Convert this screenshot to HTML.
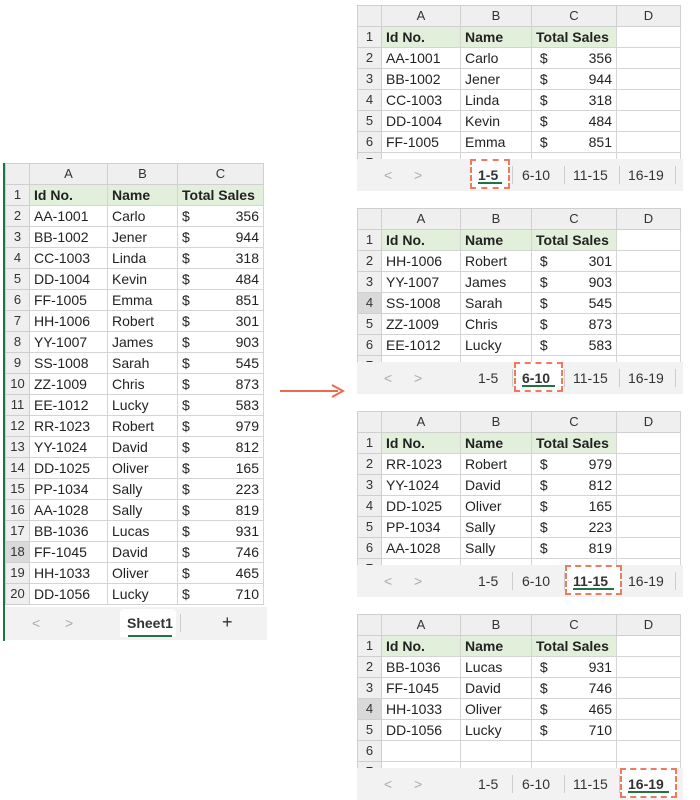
<!DOCTYPE html>
<html><head><meta charset="utf-8"><style>
body{margin:0;width:700px;height:800px;background:#fff;position:relative;font-family:"Liberation Sans",sans-serif;color:#222;overflow:hidden}
.p{position:absolute}
table{border-collapse:collapse;table-layout:fixed;font-size:14px}
td{border:1px solid #d4d4d4;height:20px;padding:0 4px;white-space:nowrap;overflow:hidden;line-height:20px}
tr.h td{background:#efefef;text-align:center;color:#333;font-size:13px;border-color:#cfcfcf}
td.n{background:#efefef;text-align:center;color:#333;font-size:13px;padding:0;border-color:#cfcfcf}
tr.g td:not(.n):not(.d){background:#e2efda;font-weight:bold}
td.s span{float:right}
.bar{position:absolute;background:#f2f2f2;font-size:14px;color:#333}
.bar span{position:absolute;top:8px}
.arr{color:#aaa;font-size:14px}
.act{position:absolute;background:#fff;border:2px dashed #ee7b60;font-weight:bold}
.act i{position:absolute;left:6px;right:6px;bottom:3px;height:2px;background:#217346}
.sep{position:absolute;width:1px;height:18px;background:#ccc;top:7px}
</style></head><body>

<div class="p" style="left:3px;top:163px;width:2px;height:478px;background:#217346"></div>
<div class="p" style="left:5px;top:163px">
<table style="width:258px">
<colgroup><col style="width:24px"><col style="width:78px"><col style="width:70px"><col style="width:86px"></colgroup>
<tr class="h"><td></td><td>A</td><td>B</td><td>C</td></tr>
<tr class="g"><td class="n">1</td><td>Id No.</td><td>Name</td><td>Total Sales</td></tr>
<tr><td class="n">2</td><td>AA-1001</td><td>Carlo</td><td class="s">$<span>356</span></td></tr>
<tr><td class="n">3</td><td>BB-1002</td><td>Jener</td><td class="s">$<span>944</span></td></tr>
<tr><td class="n">4</td><td>CC-1003</td><td>Linda</td><td class="s">$<span>318</span></td></tr>
<tr><td class="n">5</td><td>DD-1004</td><td>Kevin</td><td class="s">$<span>484</span></td></tr>
<tr><td class="n">6</td><td>FF-1005</td><td>Emma</td><td class="s">$<span>851</span></td></tr>
<tr><td class="n">7</td><td>HH-1006</td><td>Robert</td><td class="s">$<span>301</span></td></tr>
<tr><td class="n">8</td><td>YY-1007</td><td>James</td><td class="s">$<span>903</span></td></tr>
<tr><td class="n">9</td><td>SS-1008</td><td>Sarah</td><td class="s">$<span>545</span></td></tr>
<tr><td class="n">10</td><td>ZZ-1009</td><td>Chris</td><td class="s">$<span>873</span></td></tr>
<tr><td class="n">11</td><td>EE-1012</td><td>Lucky</td><td class="s">$<span>583</span></td></tr>
<tr><td class="n">12</td><td>RR-1023</td><td>Robert</td><td class="s">$<span>979</span></td></tr>
<tr><td class="n">13</td><td>YY-1024</td><td>David</td><td class="s">$<span>812</span></td></tr>
<tr><td class="n">14</td><td>DD-1025</td><td>Oliver</td><td class="s">$<span>165</span></td></tr>
<tr><td class="n">15</td><td>PP-1034</td><td>Sally</td><td class="s">$<span>223</span></td></tr>
<tr><td class="n">16</td><td>AA-1028</td><td>Sally</td><td class="s">$<span>819</span></td></tr>
<tr><td class="n">17</td><td>BB-1036</td><td>Lucas</td><td class="s">$<span>931</span></td></tr>
<tr><td class="n" style="background:#d9d9d9">18</td><td>FF-1045</td><td>David</td><td class="s">$<span>746</span></td></tr>
<tr><td class="n">19</td><td>HH-1033</td><td>Oliver</td><td class="s">$<span>465</span></td></tr>
<tr><td class="n">20</td><td>DD-1056</td><td>Lucky</td><td class="s">$<span>710</span></td></tr>
</table></div>
<div class="bar" style="left:5px;top:607px;width:262px;height:33px">
<span class="arr" style="left:27px">&lt;</span><span class="arr" style="left:60px">&gt;</span>
<div class="p" style="left:115px;top:2px;width:56px;height:28px;background:#fff;border-radius:4px 4px 0 0"></div>
<span style="left:122px;font-weight:bold">Sheet1</span>
<div class="p" style="left:123px;top:28px;width:44px;height:2px;background:#217346"></div>
<div class="sep" style="left:175px"></div>
<span style="left:217px;font-size:18px;top:5px">+</span>
</div>

<svg class="p" style="left:280px;top:383px" width="66" height="16"><line x1="0" y1="8" x2="58" y2="8" stroke="#ee6a4f" stroke-width="2"/><path d="M52 2 L63 8 L52 14" fill="none" stroke="#ee6a4f" stroke-width="2"/></svg>

<div id="r"></div>
<script>
var data=[
[["AA-1001","Carlo",356],["BB-1002","Jener",944],["CC-1003","Linda",318],["DD-1004","Kevin",484],["FF-1005","Emma",851]],
[["HH-1006","Robert",301],["YY-1007","James",903],["SS-1008","Sarah",545],["ZZ-1009","Chris",873],["EE-1012","Lucky",583]],
[["RR-1023","Robert",979],["YY-1024","David",812],["DD-1025","Oliver",165],["PP-1034","Sally",223],["AA-1028","Sally",819]],
[["BB-1036","Lucas",931],["FF-1045","David",746],["HH-1033","Oliver",465],["DD-1056","Lucky",710]]];
var tops=[5,208,411,614],h="";
var labels=["1-5","6-10","11-15","16-19"],lx=[478,522,573,628],lw=[22,31,39,39];
for(var p=0;p<4;p++){
 var t=tops[p];
 h+='<div class="p" style="left:357px;top:'+t+'px;width:326px;height:154px;overflow:hidden"><table style="width:323px"><colgroup><col style="width:24px"><col style="width:79px"><col style="width:71px"><col style="width:85px"><col style="width:64px"></colgroup>';
 h+='<tr class="h"><td></td><td>A</td><td>B</td><td>C</td><td>D</td></tr>';
 h+='<tr class="g"><td class="n">1</td><td>Id No.</td><td>Name</td><td>Total Sales</td><td class="d"></td></tr>';
 var d=data[p];
 for(var i=0;i<d.length;i++){
  var sel=(i==2&&(p==1||p==3));
  h+='<tr><td class="n"'+(sel?' style="background:#d9d9d9"':'')+'>'+(i+2)+'</td><td>'+d[i][0]+'</td><td>'+d[i][1]+'</td><td class="s">&nbsp;$<span>'+d[i][2]+'</span></td><td></td></tr>';
 }
 var n=d.length+2;
 while(n<=7){h+='<tr><td class="n">'+n+'</td><td></td><td></td><td></td><td></td></tr>';n++;}
 h+='</table></div>';
 var bt=t+154;
 h+='<div class="bar" style="left:357px;top:'+bt+'px;width:326px;height:32px">';
 h+='<span class="arr" style="left:27px">&lt;</span><span class="arr" style="left:57px">&gt;</span>';
 h+='<div class="sep" style="left:155px"></div><div class="sep" style="left:207px"></div><div class="sep" style="left:262px"></div><div class="sep" style="left:318px"></div>';
 for(var k=0;k<4;k++){
  var x=lx[k]-357;
  if(k==p){
   h+='<div class="act" style="left:'+(x-8)+'px;top:0px;width:'+(lw[k]+14)+'px;height:26px"><span style="left:6px;top:6px">'+labels[k]+'</span><i></i></div>';
  } else h+='<span style="left:'+x+'px">'+labels[k]+'</span>';
 }
 h+='</div>';
}
document.getElementById('r').innerHTML=h;
</script>
</body></html>
